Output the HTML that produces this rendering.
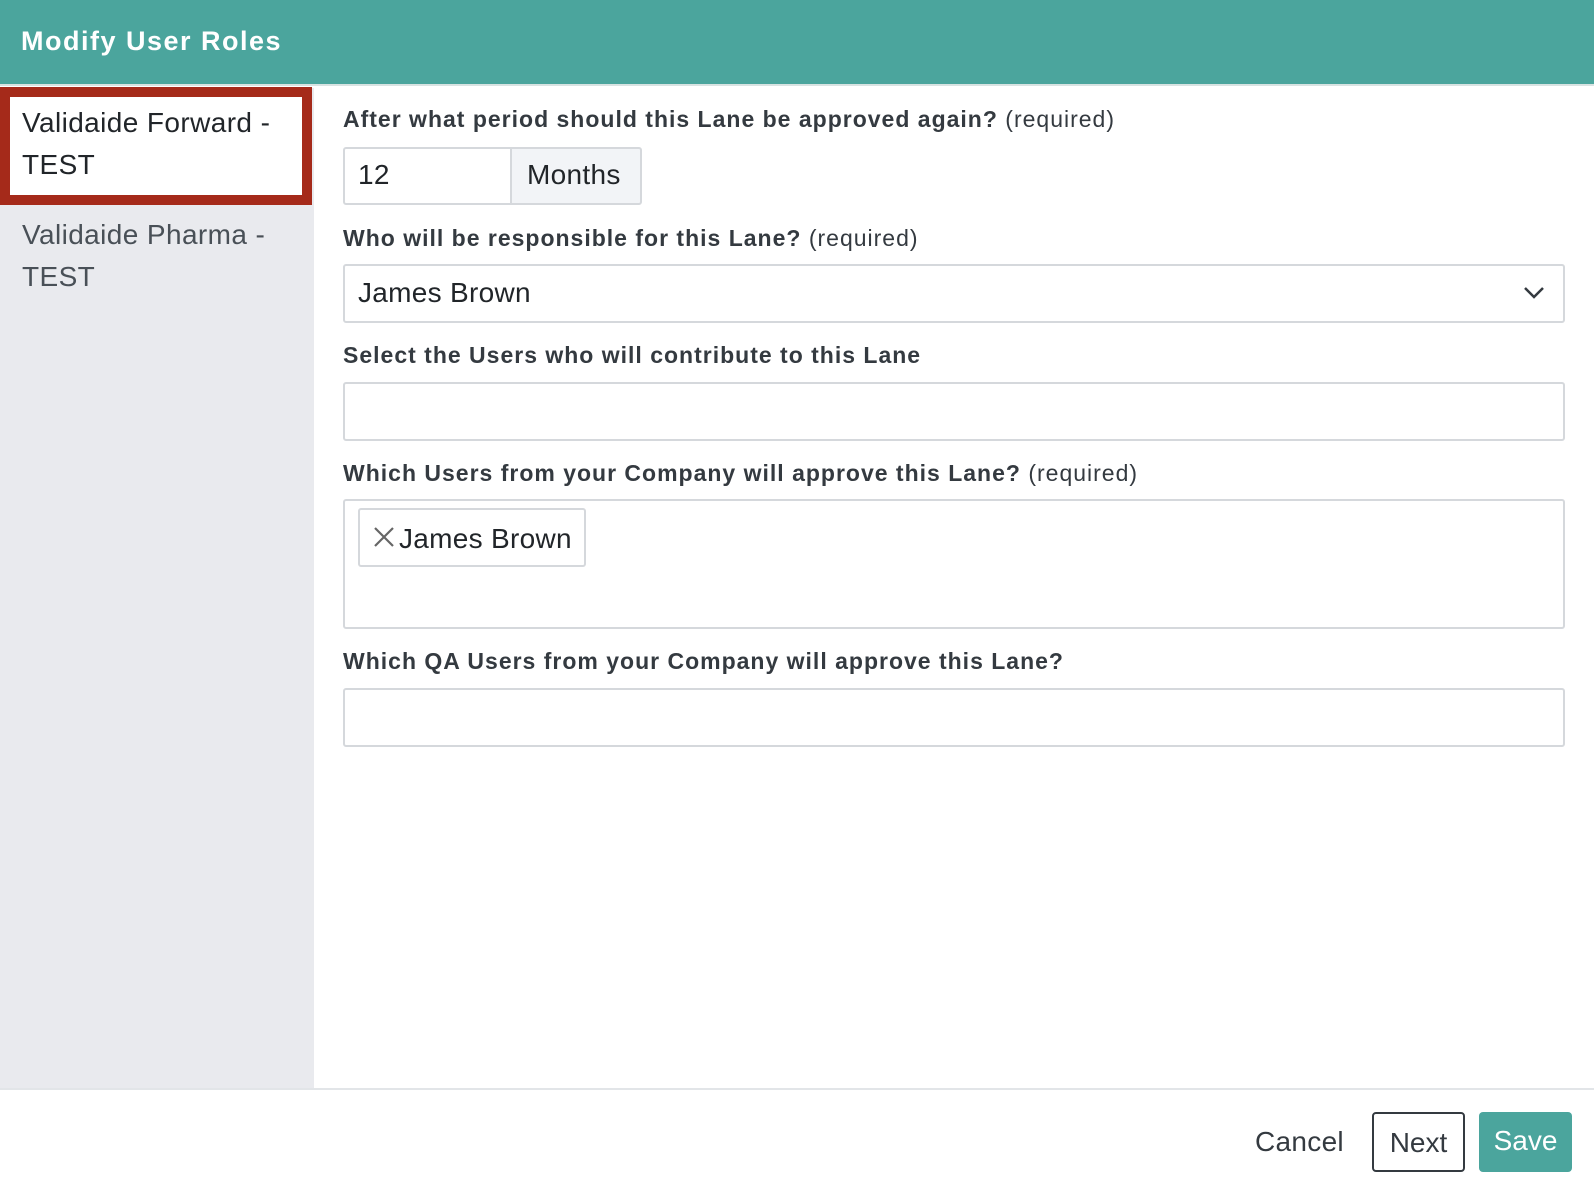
<!DOCTYPE html>
<html><head><meta charset="utf-8"><style>
*{box-sizing:border-box;margin:0;padding:0}
body{width:1594px;height:1192px;background:#fff;font-family:"Liberation Sans",sans-serif;color:#212529;position:relative;overflow:hidden}
.hdr{position:absolute;left:0;top:0;width:1594px;height:86px;background:#4ba59d;border-bottom:2px solid #d8e3e2}
.hdr h1{position:absolute;left:21px;top:26px;font-size:27px;font-weight:bold;color:#fff;letter-spacing:1.5px}
.side{position:absolute;left:0;top:88px;width:314px;height:1001px;background:#e9eaee}
.active{position:absolute;left:0;top:87px;width:312px;height:118px;background:#fff;border:10px solid #a52a1a}
.item{position:absolute;left:22px;font-size:28px;line-height:42px;color:#212529;letter-spacing:0.4px}
.lbl{position:absolute;left:343px;font-size:23px;font-weight:bold;color:#343a40;letter-spacing:1px}
.lbl span{font-weight:normal}
.box{position:absolute;left:343px;width:1222px;border:2px solid #d5d8dc;border-radius:3px;background:#fff}
.t{position:absolute;font-size:28px;color:#212529;letter-spacing:0.3px}
.foot{position:absolute;left:0;top:1088px;width:1594px;height:2px;background:#e2e5e8}
.btn{position:absolute;top:1112px;height:60px;font-size:28px;line-height:58px;text-align:center;border-radius:4px}
</style></head><body>
<div class="hdr"><h1>Modify User Roles</h1></div>
<div class="side"></div>
<div class="active"></div>
<div class="item" style="top:102px">Validaide Forward -<br>TEST</div>
<div class="item" style="top:214px;color:#495057">Validaide Pharma -<br>TEST</div>

<div class="lbl" style="top:106px">After what period should this Lane be approved again? <span>(required)</span></div>
<div class="box" style="top:147px;width:169px;height:58px;border-radius:3px 0 0 3px"></div>
<div class="t" style="left:358px;top:159px">12</div>
<div class="box" style="top:147px;left:510px;width:132px;height:58px;background:#f2f4f7;border-radius:0 3px 3px 0"></div>
<div class="t" style="left:527px;top:159px">Months</div>

<div class="lbl" style="top:225px">Who will be responsible for this Lane? <span>(required)</span></div>
<div class="box" style="top:264px;height:59px"></div>
<div class="t" style="left:358px;top:277px">James Brown</div>
<svg style="position:absolute;left:1523px;top:286px" width="22" height="14"><path d="M2 2 L11 11 L20 2" fill="none" stroke="#343a40" stroke-width="2.5"/></svg>

<div class="lbl" style="top:342px">Select the Users who will contribute to this Lane</div>
<div class="box" style="top:382px;height:59px"></div>

<div class="lbl" style="top:460px">Which Users from your Company will approve this Lane? <span>(required)</span></div>
<div class="box" style="top:499px;height:130px"></div>
<div class="box" style="left:358px;top:508px;width:228px;height:59px;border-radius:3px"></div>
<svg style="position:absolute;left:373px;top:526px" width="22" height="22"><path d="M2 2 L20 20 M20 2 L2 20" stroke="#666" stroke-width="2.2"/></svg>
<div class="t" style="left:399px;top:523px">James Brown</div>

<div class="lbl" style="top:648px">Which QA Users from your Company will approve this Lane?</div>
<div class="box" style="top:688px;height:59px"></div>

<div class="foot"></div>
<div class="t" style="left:1255px;top:1126px;color:#343a40">Cancel</div>
<div class="btn" style="left:1372px;width:93px;border:2px solid #343a40;color:#343a40">Next</div>
<div class="btn" style="left:1479px;width:93px;background:#4ba59d;color:#fff">Save</div>
</body></html>
